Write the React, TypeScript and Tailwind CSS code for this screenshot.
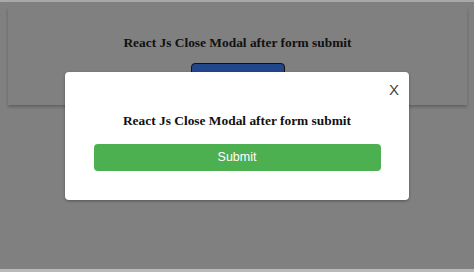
import React from "react";

export default function App() {
  return (
    <div className="relative w-[474px] h-[272px] overflow-hidden bg-[#808080]" style={{ fontFamily: '"Liberation Serif", serif' }}>
      <div className="h-[2px] bg-[#a9a9a9]" />
      <div className="pt-[5px] px-[8px]">
        <div className="h-[98px] w-[459px] bg-[#808080] shadow-[0_2px_3px_rgba(0,0,0,0.25)] flex flex-col items-center pt-[26px]">
          <h4 className="text-[13.4px] font-bold text-[#111] leading-[20px]">React Js Close Modal after form submit</h4>
          <div className="mt-[10px] w-[94px] h-[30px] rounded-[4px] bg-[#22468a] border border-[#111]" />
        </div>
      </div>
      <div className="absolute left-0 right-0 bottom-0 h-[3px] bg-[#b9b9b9]" />
      <div className="absolute left-[65px] top-[72px] w-[344px] h-[128px] bg-white rounded-[4px] shadow-[0_1px_3px_rgba(0,0,0,0.35)] flex flex-col items-center">
        <div className="self-stretch flex justify-end pr-[10px] pt-[9px] h-[34px]">
          <span className="text-[15px] leading-[18px] text-[#444]" style={{ fontFamily: '"Liberation Sans", Arial, sans-serif' }}>X</span>
        </div>
        <h4 className="mt-[5px] text-[13.4px] font-bold text-[#111] leading-[20px]">React Js Close Modal after form submit</h4>
        <button
          className="mt-[13px] w-[287px] h-[27px] rounded-[4px] bg-[#4caf50] text-white text-[12.5px] flex items-center justify-center"
          style={{ fontFamily: '"Liberation Sans", Arial, sans-serif' }}
        >
          Submit
        </button>
      </div>
    </div>
  );
}
